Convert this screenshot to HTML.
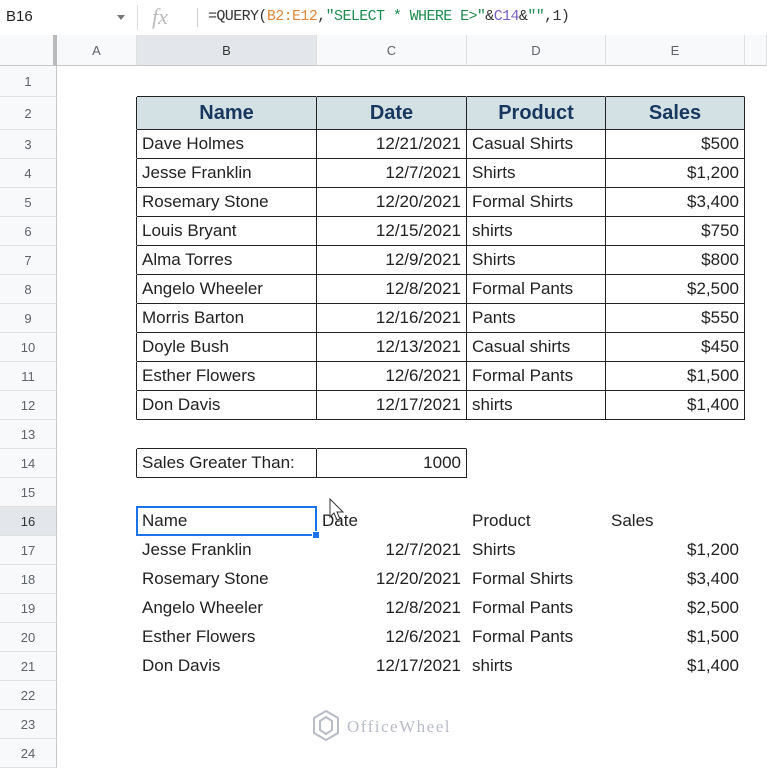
<!DOCTYPE html>
<html><head><meta charset="utf-8"><style>
body{margin:0;width:767px;height:766px;overflow:hidden;background:#fff;font-family:"Liberation Sans",Arial,sans-serif;position:relative}
.fb{position:absolute;left:0;top:0;width:767px;height:35px;border-bottom:1px solid #d0d0d0;background:#fff}
.nb{position:absolute;left:6px;top:8px;font-size:15px;color:#222}
.arr{position:absolute;left:117px;top:15px;width:0;height:0;border-left:4px solid transparent;border-right:4px solid transparent;border-top:5px solid #777}
.d1{position:absolute;left:137px;top:5px;width:1px;height:25px;background:#ddd}
.fx{position:absolute;left:152px;top:4px;font-family:"Liberation Serif",serif;font-style:italic;font-size:22px;color:#bbb}
.d2{position:absolute;left:197px;top:8px;width:1px;height:19px;background:#ccc}
.fm{position:absolute;left:208px;top:8px;font-family:"Liberation Mono",monospace;font-size:15px;color:#333;letter-spacing:-0.6px}
table{position:absolute;left:0;top:35px;border-collapse:separate;border-spacing:0;table-layout:fixed}
td{border-right:1px solid transparent;border-bottom:1px solid transparent;padding:0 5px;font-size:17px;color:#222;white-space:nowrap;overflow:visible;box-sizing:border-box}
td.rh{background:#f8f9fa;color:#5f6368;font-size:13px;text-align:center;border-right:1px solid #c8c8c8;border-bottom:1px solid #e0e0e0}
tr.ch td{background:#f8f9fa;color:#5f6368;font-size:13px;text-align:center;border-bottom:1px solid #c8c8c8;border-right:1px solid #e0e0e0;height:31px}
.r{text-align:right}
.bk{border-right:1px solid #222!important;border-bottom:1px solid #222!important}
.bb{border-bottom:1px solid #222!important}
.br{border-right:1px solid #222!important}
.hd{background:#d3e1e5;color:#17375e;font-weight:bold;font-size:20px;text-align:center}
.sel{background:#e3e6ea!important;color:#333!important}
</style></head><body>
<div class="fb"><span class="nb">B16</span><span class="arr"></span><span class="d1"></span><span class="fx">fx</span><span class="d2"></span>
<span class="fm">=QUERY(<span style="color:#e0893c">B2:E12</span>,<span style="color:#1e8c4e">"SELECT * WHERE E&gt;"</span>&amp;<span style="color:#7a5fc8">C14</span>&amp;<span style="color:#1e8c4e">""</span>,1)</span></div>
<table>
<colgroup><col style="width:57px"><col style="width:80px"><col style="width:180px"><col style="width:150px"><col style="width:139px"><col style="width:139px"><col style="width:22px"></colgroup>
<tr class="ch"><td style="border-right:4px solid #bbb"></td><td>A</td><td class="sel">B</td><td>C</td><td>D</td><td>E</td><td></td></tr>
<tr style="height:31px"><td class="rh">1</td><td></td><td class="bb"></td><td class="bb"></td><td class="bb"></td><td class="bb"></td><td></td></tr>
<tr style="height:33px"><td class="rh">2</td><td class="br"></td><td class="hd bk">Name</td><td class="hd bk">Date</td><td class="hd bk">Product</td><td class="hd bk">Sales</td><td></td></tr>
<tr style="height:29px"><td class="rh">3</td><td class="br"></td><td class="bk">Dave Holmes</td><td class="bk r">12/21/2021</td><td class="bk">Casual Shirts</td><td class="bk r">$500</td><td></td></tr>
<tr style="height:29px"><td class="rh">4</td><td class="br"></td><td class="bk">Jesse Franklin</td><td class="bk r">12/7/2021</td><td class="bk">Shirts</td><td class="bk r">$1,200</td><td></td></tr>
<tr style="height:29px"><td class="rh">5</td><td class="br"></td><td class="bk">Rosemary Stone</td><td class="bk r">12/20/2021</td><td class="bk">Formal Shirts</td><td class="bk r">$3,400</td><td></td></tr>
<tr style="height:29px"><td class="rh">6</td><td class="br"></td><td class="bk">Louis Bryant</td><td class="bk r">12/15/2021</td><td class="bk">shirts</td><td class="bk r">$750</td><td></td></tr>
<tr style="height:29px"><td class="rh">7</td><td class="br"></td><td class="bk">Alma Torres</td><td class="bk r">12/9/2021</td><td class="bk">Shirts</td><td class="bk r">$800</td><td></td></tr>
<tr style="height:29px"><td class="rh">8</td><td class="br"></td><td class="bk">Angelo Wheeler</td><td class="bk r">12/8/2021</td><td class="bk">Formal Pants</td><td class="bk r">$2,500</td><td></td></tr>
<tr style="height:29px"><td class="rh">9</td><td class="br"></td><td class="bk">Morris Barton</td><td class="bk r">12/16/2021</td><td class="bk">Pants</td><td class="bk r">$550</td><td></td></tr>
<tr style="height:29px"><td class="rh">10</td><td class="br"></td><td class="bk">Doyle Bush</td><td class="bk r">12/13/2021</td><td class="bk">Casual shirts</td><td class="bk r">$450</td><td></td></tr>
<tr style="height:29px"><td class="rh">11</td><td class="br"></td><td class="bk">Esther Flowers</td><td class="bk r">12/6/2021</td><td class="bk">Formal Pants</td><td class="bk r">$1,500</td><td></td></tr>
<tr style="height:29px"><td class="rh">12</td><td class="br"></td><td class="bk">Don Davis</td><td class="bk r">12/17/2021</td><td class="bk">shirts</td><td class="bk r">$1,400</td><td></td></tr>
<tr style="height:29px"><td class="rh">13</td><td></td><td class="bb"></td><td class="bb"></td><td></td><td></td><td></td></tr>
<tr style="height:29px"><td class="rh">14</td><td class="br"></td><td class="bk">Sales Greater Than:</td><td class="bk r">1000</td><td></td><td></td><td></td></tr>
<tr style="height:29px"><td class="rh">15</td><td></td><td></td><td></td><td></td><td></td><td></td></tr>
<tr style="height:29px"><td class="rh sel">16</td><td></td><td style="position:relative">Name<div style="position:absolute;left:-1px;top:-1px;right:-1px;bottom:-1px;border:2px solid #1a73e8"></div><div style="position:absolute;right:-4px;bottom:-4px;width:6px;height:6px;background:#1a73e8;border:1px solid #fff"></div></td><td>Date</td><td>Product</td><td>Sales</td><td></td></tr>
<tr style="height:29px"><td class="rh">17</td><td></td><td>Jesse Franklin</td><td class="r">12/7/2021</td><td>Shirts</td><td class="r">$1,200</td><td></td></tr>
<tr style="height:29px"><td class="rh">18</td><td></td><td>Rosemary Stone</td><td class="r">12/20/2021</td><td>Formal Shirts</td><td class="r">$3,400</td><td></td></tr>
<tr style="height:29px"><td class="rh">19</td><td></td><td>Angelo Wheeler</td><td class="r">12/8/2021</td><td>Formal Pants</td><td class="r">$2,500</td><td></td></tr>
<tr style="height:29px"><td class="rh">20</td><td></td><td>Esther Flowers</td><td class="r">12/6/2021</td><td>Formal Pants</td><td class="r">$1,500</td><td></td></tr>
<tr style="height:29px"><td class="rh">21</td><td></td><td>Don Davis</td><td class="r">12/17/2021</td><td>shirts</td><td class="r">$1,400</td><td></td></tr>
<tr style="height:29px"><td class="rh">22</td><td></td><td></td><td></td><td></td><td></td><td></td></tr>
<tr style="height:29px"><td class="rh">23</td><td></td><td></td><td></td><td></td><td></td><td></td></tr>
<tr style="height:29px"><td class="rh">24</td><td></td><td></td><td></td><td></td><td></td><td></td></tr>
</table>
<svg style="position:absolute;left:311px;top:709px" width="30" height="34" viewBox="0 0 30 34"><path d="M15 2 L27 9 L27 24 L15 31 L3 24 L3 9 Z M15 8 L21 12 L21 21 L15 25 L9 21 L9 12 Z" fill="none" stroke="#b8bcc6" stroke-width="2"/></svg>
<div style="position:absolute;left:347px;top:717px;font-family:'Liberation Serif',serif;font-size:17px;letter-spacing:1.5px;color:#b8bcc6">OfficeWheel</div>
<svg style="position:absolute;left:329px;top:498px" width="20" height="26" viewBox="0 0 20 26"><path d="M1 1 L1 19 L5 15 L8 22 L11 21 L8 14 L14 14 Z" fill="#fff" stroke="#333" stroke-width="1"/></svg>
</body></html>
